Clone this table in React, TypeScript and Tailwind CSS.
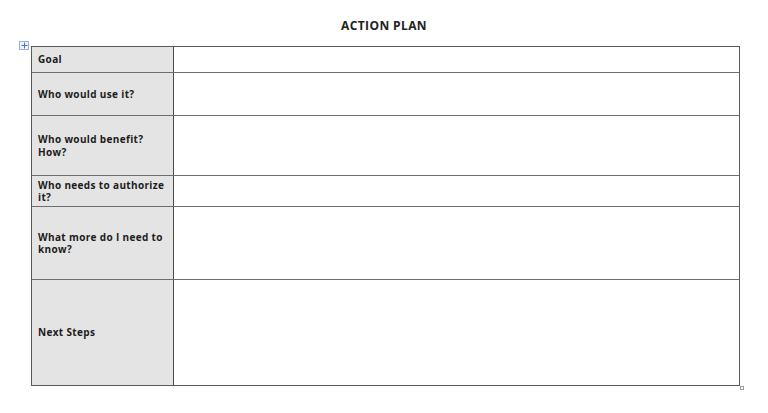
import React from "react";

const rows: { label: string[]; h: string }[] = [
  { label: ["Goal"], h: "h-[25px]" },
  { label: ["Who would use it?"], h: "h-[43px]" },
  { label: ["Who would benefit?", "How?"], h: "h-[60px]" },
  { label: ["Who needs to authorize", "it?"], h: "h-[31px]" },
  { label: ["What more do I need to", "know?"], h: "h-[73px]" },
  { label: ["Next Steps"], h: "h-[106px]" },
];

export default function App() {
  return (
    <div className="w-[768px] h-[413px] bg-white font-['Open_Sans',Arial,sans-serif] text-[#1c1c1c]">
      {/* title */}
      <div className="pt-[18px] h-[40px] text-center text-[12px] font-bold leading-[15px] tracking-[0.4px] text-[#222]">
        ACTION PLAN
      </div>

      <div className="flex pl-[19px]">
        {/* table move handle */}
        <div className="mt-[1px] w-[10px] h-[9px] border border-[#9ab3d6] bg-[#eef3fb] flex items-center justify-center">
          <svg width="7" height="7" viewBox="0 0 7 7">
            <path d="M3.5 0.5V6.5M0.5 3.5H6.5" stroke="#4a78b8" strokeWidth="1" />
          </svg>
        </div>

        <div className="relative mt-[6px] ml-[2px]">
          <div className="w-[709px] border border-[#5a5a5a] flex flex-col">
            {rows.map((r, i) => (
              <div
                key={i}
                className={`flex ${r.h} ${i > 0 ? "border-t border-[#6e6e6e]" : ""}`}
              >
                <div className="w-[142px] shrink-0 bg-[#e4e4e4] border-r border-[#4a4a4a] flex flex-col justify-center pl-[6px] text-[10px] font-bold leading-[12.5px] tracking-[0.35px]">
                  {r.label.map((l) => (
                    <span key={l}>{l}</span>
                  ))}
                </div>
                <div className="flex-1 bg-white" />
              </div>
            ))}
          </div>
          {/* resize handle */}
          <div className="absolute right-[-4px] bottom-[-4px] w-[4px] h-[4px] border border-[#9a9a9a] bg-white" />
        </div>
      </div>
    </div>
  );
}
